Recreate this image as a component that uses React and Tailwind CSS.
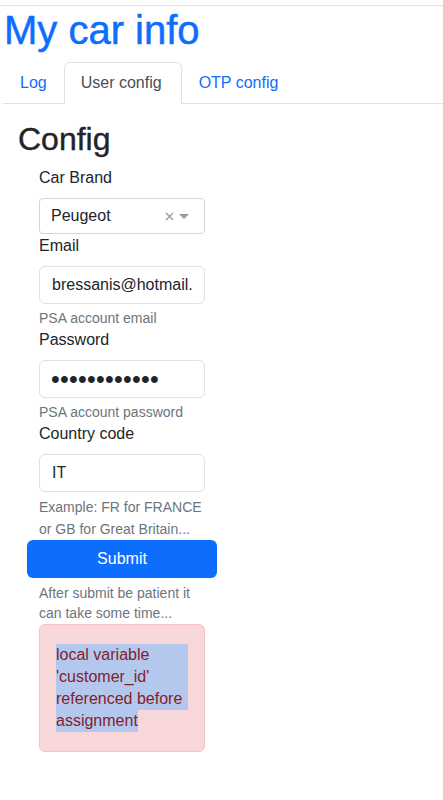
export default function App() {
  return (
    <div className="min-h-screen bg-white font-['Liberation_Sans',Arial,sans-serif] text-[#212529] pt-[5px]">
      <div className="border-t border-[#dee2e6]" />
      <div className="pl-[3px]">
        <h1 className="text-[40px] leading-[48px] font-medium text-[#0d6efd] mb-2 pl-[1px] [-webkit-text-stroke:0.5px_#0d6efd]">
          My car info
        </h1>
        <ul className="flex border-b border-[#dee2e6] text-base leading-6">
          <li className="-mb-px">
            <a className="block px-4 py-2 border border-transparent rounded-t-md text-[#0d6efd]">Log</a>
          </li>
          <li className="-mb-px">
            <a className="block pl-4 pr-[19px] py-2 border border-[#dee2e6] border-b-white bg-white rounded-t-md text-[#495057]">
              User config
            </a>
          </li>
          <li className="-mb-px">
            <a className="block px-4 py-2 border border-transparent rounded-t-md text-[#0d6efd]">OTP config</a>
          </li>
        </ul>
        <div className="pl-[15px] pt-4">
          <h2 className="text-[32px] leading-[38px] font-medium mb-2 [-webkit-text-stroke:0.4px_#212529]">Config</h2>
          <div className="w-[199px]">
            <div className="ml-[21px] w-[166px]">
              <label className="block text-base leading-6 mb-2">Car Brand</label>
              <div className="h-9 border border-[#d4d4d4] rounded flex items-center pl-[11px] pr-[15px]">
                <span className="flex-1 text-base">Peugeot</span>
                <svg width="9" height="9" viewBox="0 0 9 9" className="mr-[5px]">
                  <path d="M1 1L8 8M8 1L1 8" stroke="#999" strokeWidth="1.3" />
                </svg>
                <svg width="10" height="5" viewBox="0 0 10 5">
                  <path d="M0 0H10L5 5Z" fill="#999" />
                </svg>
              </div>
              <label className="block text-base leading-6 mb-2">Email</label>
              <div className="h-[38px] border border-[#dee2e6] rounded-md px-3 flex items-center overflow-hidden">
                <span className="whitespace-nowrap text-base">bressanis@hotmail.</span>
              </div>
              <div className="mt-1 text-sm leading-5 text-[#6c757d]">PSA account email</div>
              <label className="block text-base leading-6 mb-2">Password</label>
              <div className="h-[38px] border border-[#dee2e6] rounded-md px-3 flex items-center overflow-hidden">
                <span className="whitespace-nowrap text-[25px] leading-none tracking-[0.25px] ml-[-1px] mt-[1px]">
                  ••••••••••••
                </span>
              </div>
              <div className="mt-1 text-sm leading-5 text-[#6c757d]">PSA account password</div>
              <label className="block text-base leading-6 mb-2">Country code</label>
              <div className="h-[38px] border border-[#dee2e6] rounded-md px-3 flex items-center">
                <span className="text-base">IT</span>
              </div>
              <div className="mt-1 text-sm leading-[22px] text-[#6c757d]">
                <div>Example: FR for FRANCE</div>
                <div>or GB for Great Britain...</div>
              </div>
            </div>
            <button className="block ml-[9px] w-[190px] h-[38px] bg-[#0d6efd] text-white text-base rounded-md">
              Submit
            </button>
            <div className="ml-[21px] w-[166px]">
              <div className="mt-[5px] text-sm leading-5 text-[#6c757d]">
                <div>After submit be patient it</div>
                <div>can take some time...</div>
              </div>
              <div className="mt-px bg-[#f8d7da] border border-[#f5c2c7] rounded-md px-4 py-[19px] text-[#842029] text-base leading-[22px]">
                <div className="bg-[#b4c8ee]">local variable</div>
                <div className="bg-[#b4c8ee]">'customer_id'</div>
                <div className="bg-[#b4c8ee]">referenced before</div>
                <div>
                  <span className="bg-[#b4c8ee] inline-block">assignment</span>
                </div>
              </div>
            </div>
          </div>
        </div>
      </div>
    </div>
  );
}
